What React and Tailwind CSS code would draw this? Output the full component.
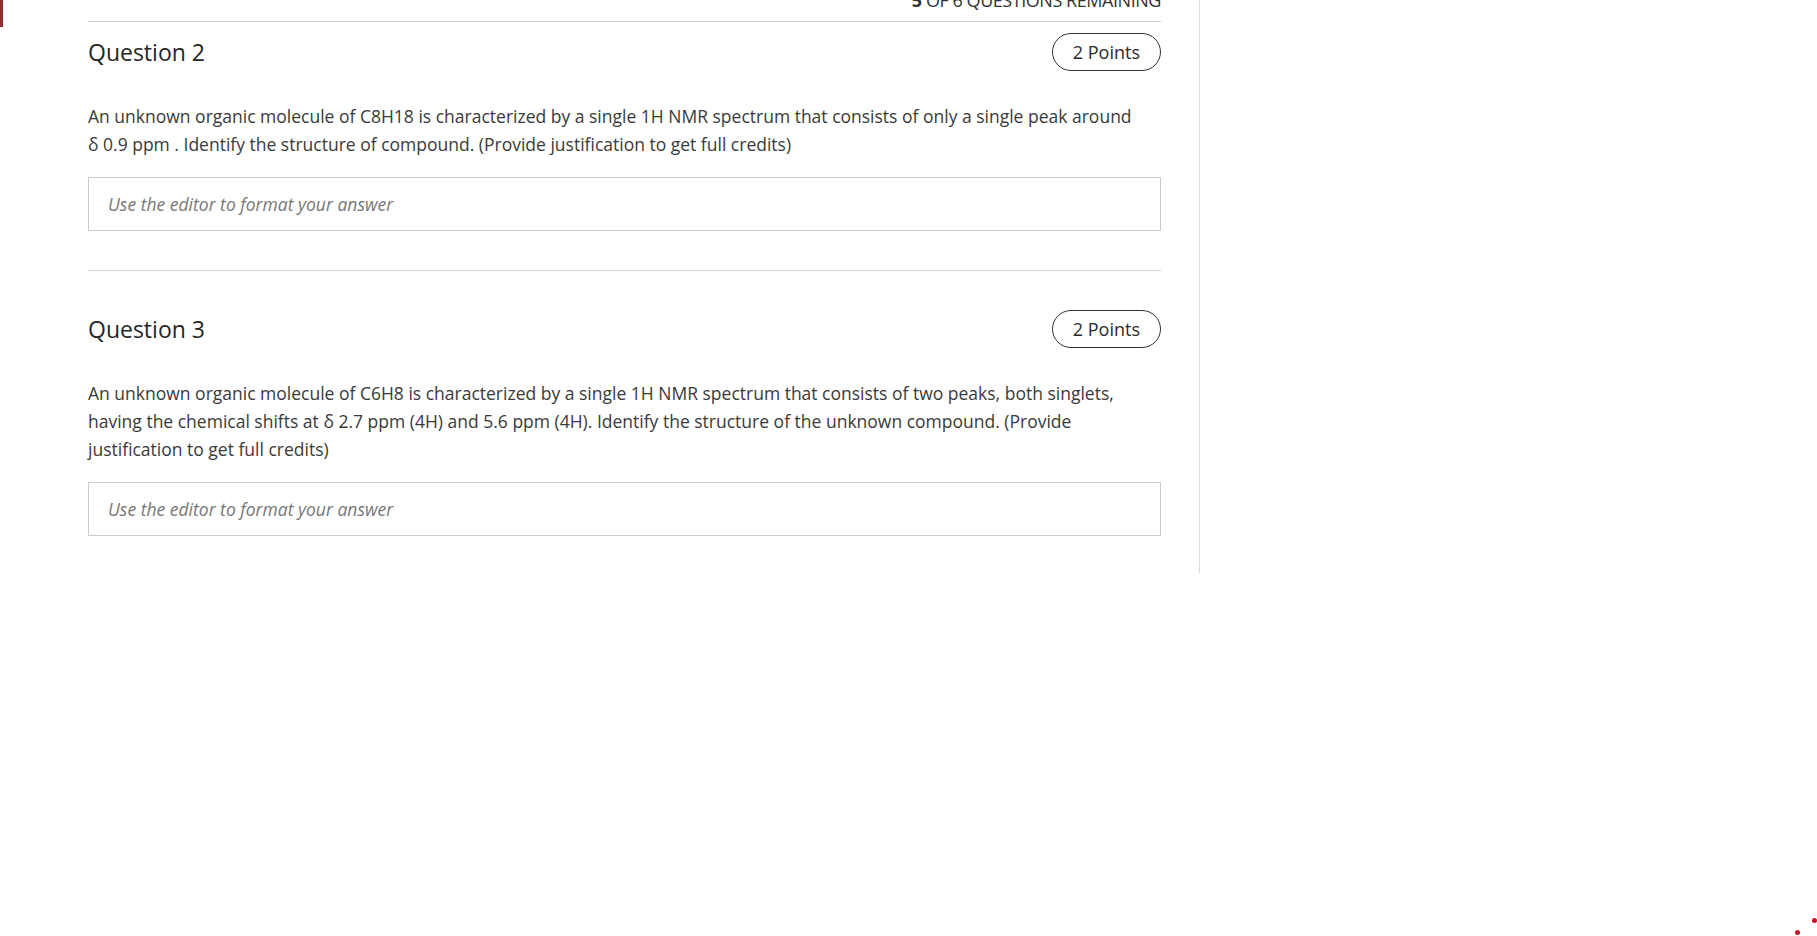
import React from 'react';

const questions = [
  {
    n: 2,
    points: 2,
    text: 'An unknown organic molecule of C8H18 is characterized by a single 1H NMR spectrum that consists of only a single peak around δ 0.9 ppm . Identify the structure of compound. (Provide justification to get full credits)',
  },
  {
    n: 3,
    points: 2,
    text: 'An unknown organic molecule of C6H8 is characterized by a single 1H NMR spectrum that consists of two peaks, both singlets, having the chemical shifts at δ 2.7 ppm (4H) and 5.6 ppm (4H). Identify the structure of the unknown compound. (Provide justification to get full credits)',
  },
];

function Question({ q, first }) {
  return (
    <section className={first ? 'pt-[11px]' : 'mt-[39px] border-t border-[#d4d4d4] pt-[39px]'}>
      {/* header */}
      <div className="flex items-center justify-between">
        <h2 className="text-[23px] leading-[30px] font-normal text-[#262626]">Question {q.n}</h2>
        <div className="h-[38px] px-[20px] rounded-full border border-[#333] flex items-center text-[18px] text-[#2b2b2b]">
          {q.points} Points
        </div>
      </div>

      <p className="mt-[31px] pr-[28px] text-[17.5px] leading-[28px] text-[#3a3a3a]">{q.text}</p>

      {/* answer editor */}
      <div className="mt-[19px] h-[54px] border border-[#cccccc] px-[19px] flex items-center">
        <span className="italic text-[17.5px] text-[#777]">Use the editor to format your answer</span>
      </div>
    </section>
  );
}

export default function App() {
  return (
    <div className="relative min-h-screen bg-white overflow-hidden font-['Open_Sans',sans-serif]">
      <div className="relative w-[1200px] border-r border-[#dcdcdc] pl-[88px] pr-[38px] pb-[37px]">
        <div className="absolute left-0 top-0 w-[3px] h-[36px] bg-[#a8262b]" />

        {/* progress header */}
        <div className="border-b border-[#cfcfcf] pb-[12px]">
          <div className="-mt-[9px] h-[18px] text-right text-[18px] leading-[18px] text-[#333] tracking-tight">
            <span className="font-bold">5</span> OF 6 QUESTIONS REMAINING
          </div>
        </div>

        {questions.map((q, i) => (
          <Question key={q.n} q={q} first={i === 0} />
        ))}
      </div>

      {/* loading dots, mostly off-screen */}
      <div className="absolute left-[1795px] top-[930px] w-[5px] h-[5px] rounded-full bg-[#c4162a]" />
      <div className="absolute left-[1812px] top-[918px] w-[5px] h-[5px] rounded-full bg-[#c4162a]" />
    </div>
  );
}
